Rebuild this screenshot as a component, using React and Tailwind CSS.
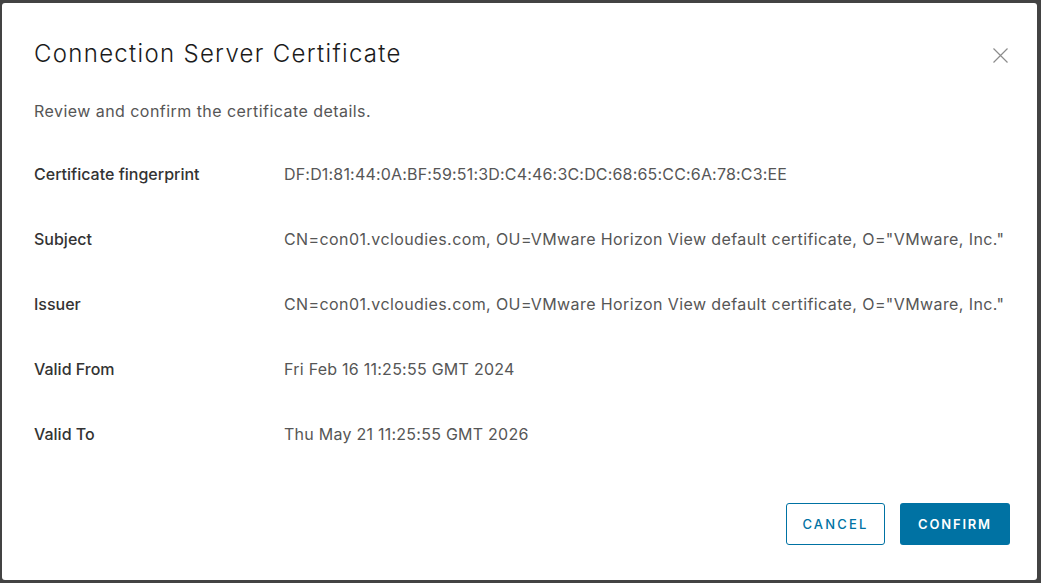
import React from "react";

const rows = [
  ["Certificate fingerprint", "DF:D1:81:44:0A:BF:59:51:3D:C4:46:3C:DC:68:65:CC:6A:78:C3:EE", "tracking-[0.18px]"],
  ["Subject", 'CN=con01.vcloudies.com, OU=VMware Horizon View default certificate, O="VMware, Inc."', "tracking-[0.4px]"],
  ["Issuer", 'CN=con01.vcloudies.com, OU=VMware Horizon View default certificate, O="VMware, Inc."', "tracking-[0.4px]"],
  ["Valid From", "Fri Feb 16 11:25:55 GMT 2024", "tracking-[0.25px]"],
  ["Valid To", "Thu May 21 11:25:55 GMT 2026", "tracking-[0.25px]"],
];

export default function App() {
  return (
    <div
      className="w-[1041px] h-[583px] bg-[#434343] pl-[2px] pr-[4px] pt-[3px] pb-[3px]"
      style={{ fontFamily: "Inter, 'Noto Sans', sans-serif" }}
    >
      <div className="h-full bg-white rounded-[3px] flex flex-col pl-[32px] pr-[25px]">
        <div className="flex items-center justify-between pt-[35px]">
          <h1 className="text-[24px] leading-[32px] font-light text-[#1b1b1b] tracking-[1.3px]">
            Connection Server Certificate
          </h1>
          <button className="w-[24px] h-[24px] flex items-center justify-center text-[#8c8c8c] mt-[2px]">
            <svg width="15" height="15" viewBox="0 0 15 15" fill="none" stroke="currentColor" strokeWidth="1.2">
              <path d="M0.5 0.5L14.5 14.5M14.5 0.5L0.5 14.5" />
            </svg>
          </button>
        </div>
        <p className="mt-[31px] text-[16px] leading-[20px] text-[#565656] tracking-[0.45px]">
          Review and confirm the certificate details.
        </p>
        <div className="mt-[43px] flex flex-col gap-[45px]">
          {rows.map(([k, v, t]) => (
            <div key={k} className="flex text-[16px] leading-[20px]">
              <div className="w-[250px] shrink-0 font-medium text-[#333333]">{k}</div>
              <div className={"text-[#565656] whitespace-nowrap " + t}>{v}</div>
            </div>
          ))}
        </div>
        <div className="mt-auto mb-[35px] flex justify-end gap-[15px] pr-[2px]">
          <button className="w-[99px] h-[42px] pt-[2px] border border-[#0072a3] rounded-[3px] text-[#0072a3] text-[13px] font-medium tracking-[2.2px]">
            CANCEL
          </button>
          <button className="w-[110px] h-[42px] pt-[2px] bg-[#0072a3] rounded-[3px] text-white text-[13px] font-semibold tracking-[1.8px]">
            CONFIRM
          </button>
        </div>
      </div>
    </div>
  );
}
